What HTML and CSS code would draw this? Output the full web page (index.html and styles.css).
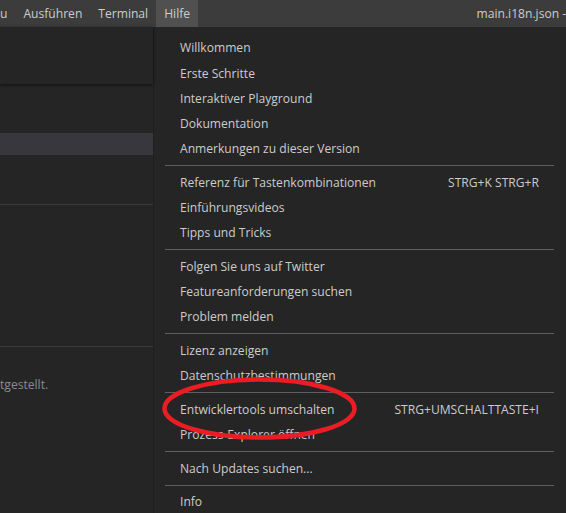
FILE: index.html
```html
<!DOCTYPE html>
<html lang="de">
<head>
    <meta charset="UTF-8">
    <title>main.i18n.json</title>
    <link rel="stylesheet" href="styles.css">
</head>
<body>
    <div class="titlebar">
        <div class="menubar">
            <div class="menu-title cut">u</div>
            <div class="menu-title">Ausführen</div>
            <div class="menu-title">Terminal</div>
            <div class="menu-title open">Hilfe</div>
        </div>
        <div class="window-title">main.i18n.json - a</div>
    </div>

    <div class="workbench">
        <div class="side">
            <div class="tabs"></div>
            <div class="list">
                <div class="row"></div>
                <div class="row active"></div>
                <div class="row"></div>
            </div>
            <div class="panel"></div>
            <div class="panel last">
                <p class="msg">tgestellt.</p>
            </div>
        </div>

        <div class="dropdown">
            <div class="item">Willkommen</div>
            <div class="item">Erste Schritte</div>
            <div class="item">Interaktiver Playground</div>
            <div class="item">Dokumentation</div>
            <div class="item">Anmerkungen zu dieser Version</div>
            <div class="sep"></div>
            <div class="item">Referenz für Tastenkombinationen <span class="key">STRG+K STRG+R</span></div>
            <div class="item">Einführungsvideos</div>
            <div class="item">Tipps und Tricks</div>
            <div class="sep"></div>
            <div class="item">Folgen Sie uns auf Twitter</div>
            <div class="item">Featureanforderungen suchen</div>
            <div class="item">Problem melden</div>
            <div class="sep"></div>
            <div class="item">Lizenz anzeigen</div>
            <div class="item">Datenschutzbestimmungen</div>
            <div class="sep"></div>
            <div class="item">Entwicklertools umschalten <span class="key">STRG+UMSCHALTTASTE+I</span></div>
            <div class="item">Prozess-Explorer öffnen</div>
            <div class="sep"></div>
            <div class="item">Nach Updates suchen...</div>
            <div class="sep"></div>
            <div class="item">Info</div>
        </div>
    </div>

    <!-- red marker drawn over the screenshot -->
    <svg class="marker" width="566" height="513" viewBox="0 0 566 513">
        <ellipse cx="259.5" cy="408.5" rx="95" ry="29" fill="none" stroke="#ec1c24" stroke-width="4.5"/>
    </svg>
</body>
</html>
```

FILE: styles.css
```css
html, body {
    margin: 0;
    padding: 0;
    height: 100%;
    overflow: hidden;
}

body {
    background-color: #252526;
    color: #cccccc;
    font-family: "Open Sans", "Noto Sans", sans-serif;
    font-size: 12.1px;
    position: relative;
}

.titlebar {
    height: 27px;
    background-color: #3c3c3c;
    display: flex;
    justify-content: space-between;
    align-items: stretch;
}

.menubar {
    display: flex;
    margin-left: -8px;
}

.menu-title {
    display: flex;
    align-items: center;
    padding: 0 8px;
    color: #cccccc;
}

.menu-title.open {
    background-color: #505050;
}

.window-title {
    display: flex;
    align-items: center;
    margin-right: -10px;
    color: #cccccc;
}

.workbench {
    display: flex;
    height: calc(100% - 27px);
}

.side {
    width: 153px;
    flex-shrink: 0;
    display: flex;
    flex-direction: column;
}

.tabs {
    height: 57px;
    background-color: #252526;
    box-shadow: 0 1px 3px #111;
    position: relative;
}

.list {
    padding-top: 27px;
    height: 93px;
    border-bottom: 1px solid #3a3a3a;
}

.row {
    height: 22px;
}

.row.active {
    background-color: #37373d;
}

.panel {
    height: 141px;
    border-bottom: 1px solid #3a3a3a;
}

.panel.last {
    border-bottom: none;
}

.msg {
    margin: 29px 0 0 0;
    color: #8b8b8b;
}

.dropdown {
    flex: 1;
    background-color: #252526;
    border-left: 1px solid #1f1f1f;
    padding: 8.3px 0;
}

.item {
    height: 25.2px;
    display: flex;
    align-items: center;
    justify-content: space-between;
    padding: 0 27px 0 26px;
}

.sep {
    height: 1px;
    margin: 3.75px 12px 3.75px 11px;
    background-color: #5f5f5f;
}

.marker {
    position: absolute;
    left: 0;
    top: 0;
    pointer-events: none;
}
```
